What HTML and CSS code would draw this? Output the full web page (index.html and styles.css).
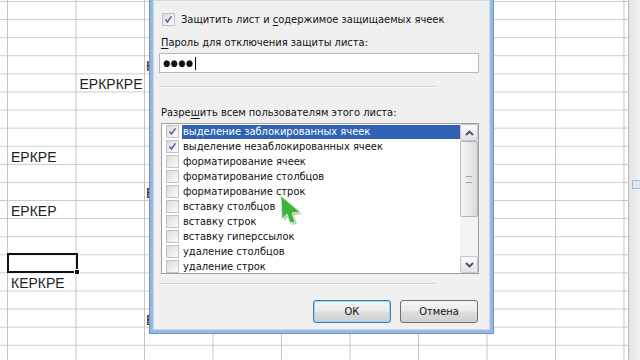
FILE: index.html
```html
<!DOCTYPE html>
<html lang="ru">
<head>
    <meta charset="UTF-8">
    <title>Защита листа</title>
    <link rel="stylesheet" href="styles.css">
</head>
<body>

<div class="screen">
    <div class="sheet">
        <div class="cell c3 r4">Н</div>
        <div class="cell c2 r5">ЕРКРКРЕ</div>
        <div class="cell c1 r9">ЕРКРЕ</div>
        <div class="cell c3 r11">Е</div>
        <div class="cell c1 r12">ЕРКЕР</div>
        <div class="cell c1 r15 selected"></div>
        <div class="cell c1 r16">КЕРКРЕ</div>
        <div class="cell c3 r18">Е</div>
    </div>
    <div class="side-bar">
        <div class="side-knob"></div>
    </div>

    <div class="dialog">
        <div class="check-row">
            <span class="box">
                <svg viewBox="0 0 13 13"><path d="M3 6.5 L5.3 9.5 L10 2.8" /></svg>
            </span>
            <span>Защитить лист и <u>с</u>одержимое защищаемых ячеек</span>
        </div>

        <div class="field-label"><u>П</u>ароль для отключения защиты листа:</div>
        <div class="password">
            <span class="dots">●●●●</span>
        </div>

        <div class="divider"></div>

        <div class="field-label allow">Разре<u>ш</u>ить всем пользователям этого листа:</div>
        <div class="list">
            <ul class="items">
                <li class="item active">
                    <span class="box"><svg viewBox="0 0 13 13"><path d="M3 6.5 L5.3 9.5 L10 2.8" /></svg></span>
                    <span class="text">выделение заблокированных ячеек</span>
                </li>
                <li class="item">
                    <span class="box"><svg viewBox="0 0 13 13"><path d="M3 6.5 L5.3 9.5 L10 2.8" /></svg></span>
                    <span class="text">выделение незаблокированных ячеек</span>
                </li>
                <li class="item"><span class="box"></span><span class="text">форматирование ячеек</span></li>
                <li class="item"><span class="box"></span><span class="text">форматирование столбцов</span></li>
                <li class="item"><span class="box"></span><span class="text">форматирование строк</span></li>
                <li class="item"><span class="box"></span><span class="text">вставку столбцов</span></li>
                <li class="item"><span class="box"></span><span class="text">вставку строк</span></li>
                <li class="item"><span class="box"></span><span class="text">вставку гиперссылок</span></li>
                <li class="item"><span class="box"></span><span class="text">удаление столбцов</span></li>
                <li class="item"><span class="box"></span><span class="text">удаление строк</span></li>
            </ul>
            <div class="vbar">
                <div class="vbtn">
                    <svg viewBox="0 0 9 6"><path d="M1 5 L4.5 1.5 L8 5" /></svg>
                </div>
                <div class="thumb"><span class="grip"></span></div>
                <div class="track"></div>
                <div class="vbtn">
                    <svg viewBox="0 0 9 6"><path d="M1 1 L4.5 4.5 L8 1" /></svg>
                </div>
            </div>
        </div>

        <div class="divider lower"></div>

        <div class="buttons">
            <button class="btn default">ОК</button>
            <button class="btn">Отмена</button>
        </div>
    </div>

    <svg class="pointer" viewBox="0 0 26 32">
        <path class="pointer-shadow" d="M5 4 L24 20 L16 21 L19 30 L14 31 L11 22 L6 27 Z" />
        <path class="pointer-body" d="M3 2 L22 18 L14 19 L17 28 L12 29 L9 20 L4 25 Z" />
    </svg>
</div>

</body>
</html>
```

FILE: styles.css
```css
body {
    margin: 0;
    background-color: #fff;
}
.screen {
    position: relative;
    width: 640px;
    height: 360px;
    overflow: hidden;
    display: flex;
    background-color: #fff;
}

/* spreadsheet */
.sheet {
    flex: 1;
    display: grid;
    grid-template-columns: repeat(9, 68.5px) 1fr;
    grid-template-rows: repeat(20, 18.1px);
    padding: 1px 0 0 7px;
    background-image:
        linear-gradient(to right, #c4c4c4 1px, transparent 1px),
        linear-gradient(to bottom, #cbcbcb 1px, transparent 1px);
    background-size: 68.5px 100%, 100% 18.1px;
    background-position: 7px 0, 0 1px;
    font-family: "Liberation Sans", Arial, sans-serif;
    font-size: 14px;
    color: #222;
}
.cell {
    position: relative;
    padding: 3px 0 0 4px;
    line-height: 16px;
    white-space: nowrap;
}
.c1 { grid-column: 1; }
.c2 { grid-column: 2; }
.c3 { grid-column: 3; padding-left: 2px; }
.r4 { grid-row: 4; }
.r5 { grid-row: 5; }
.r9 { grid-row: 9; }
.r11 { grid-row: 11; }
.r12 { grid-row: 12; }
.r15 { grid-row: 15; }
.r16 { grid-row: 16; }
.r18 { grid-row: 18; }
.selected {
    margin: -1px -2px -1px 0;
    border: 2px solid #111;
}
.selected::after {
    content: "";
    position: absolute;
    right: -4px;
    bottom: -4px;
    width: 4px;
    height: 4px;
    background-color: #111;
    border: 1px solid #fff;
}
.side-bar {
    width: 12px;
    border-left: 1px solid #bdbdbd;
    background: linear-gradient(to right, #e4e4e4, #f2f2f2);
    padding-top: 180px;
    box-sizing: border-box;
}
.side-knob {
    width: 7px;
    height: 7px;
    margin-left: 3px;
    border: 1px solid #a9b8cc;
    background-color: #dfe7f2;
}

/* dialog */
.dialog {
    position: absolute;
    left: 150px;
    top: 0;
    width: 343px;
    height: 333px;
    box-sizing: border-box;
    border: 3px solid #97b8e0;
    border-top: none;
    box-shadow: 0 0 0 1px #6d93c4, inset 0 0 0 1px #c9dbf0;
    background-color: #f0f0f0;
    padding: 12px 11px 0 6px;
    display: flex;
    flex-direction: column;
    font-family: "DejaVu Sans Condensed", "DejaVu Sans", Verdana, sans-serif;
    font-stretch: semi-condensed;
    font-size: 11px;
    color: #111;
}
u {
    text-decoration-thickness: 1px;
    text-underline-offset: 2px;
}
.box {
    width: 11px;
    height: 11px;
    flex: none;
    border: 1px solid #c2c2c2;
    background: linear-gradient(135deg, #dcdcdc, #fbfbfb);
    display: flex;
}
.box svg {
    width: 11px;
    height: 11px;
}
.box path {
    fill: none;
    stroke: #50648f;
    stroke-width: 1.8;
}
.check-row {
    display: flex;
    align-items: center;
    gap: 6px;
    height: 14px;
    margin-left: 3px;
}
.field-label {
    height: 14px;
    line-height: 14px;
    margin-top: 10px;
    padding-left: 2px;
}
.password {
    margin-top: 3px;
    height: 20px;
    box-sizing: border-box;
    border: 1px solid #b5b9c2;
    background-color: #fff;
    display: flex;
    align-items: center;
    padding-left: 3px;
}
.dots {
    display: flex;
    align-items: center;
    font-size: 9px;
    letter-spacing: 0.5px;
    color: #111;
}
.dots::after {
    content: "";
    width: 1px;
    height: 13px;
    margin-left: 2px;
    background-color: #000;
}
.divider {
    margin-top: 13px;
    width: 278px;
    height: 1px;
    background-color: #d5d5d5;
    border-bottom: 1px solid #fbfbfb;
}
.field-label.allow {
    margin-top: 18px;
}
.list {
    margin: 3px 0 0 2px;
    height: 151px;
    box-sizing: border-box;
    border: 1px solid #9a9ea6;
    background-color: #fff;
    display: flex;
}
.items {
    flex: 1;
    list-style: none;
    margin: 0;
    padding: 0;
}
.item {
    height: 15px;
    display: flex;
    align-items: center;
    padding-left: 4px;
}
.item .text {
    flex: 1;
    height: 14px;
    line-height: 14px;
    margin-left: 3px;
    padding-left: 1px;
    white-space: nowrap;
}
.item.active .text {
    background-color: #3162b5;
    color: #fff;
}
.vbar {
    width: 18px;
    display: flex;
    flex-direction: column;
    background-color: #f3f3f3;
}
.vbtn {
    height: 17px;
    box-sizing: border-box;
    border: 1px solid #c4c6ca;
    border-radius: 2px;
    background: linear-gradient(to bottom, #fafafa, #e3e3e3);
    display: flex;
    align-items: center;
    justify-content: center;
}
.vbtn svg {
    width: 9px;
    height: 6px;
}
.vbtn path {
    fill: none;
    stroke: #3f4f6e;
    stroke-width: 1.8;
}
.thumb {
    height: 76px;
    box-sizing: border-box;
    border: 1px solid #b3b5b9;
    border-radius: 2px;
    background: linear-gradient(to right, #f4f4f4, #dcdcdc);
    display: flex;
    align-items: center;
    justify-content: center;
}
.grip {
    width: 6px;
    height: 5px;
    border-top: 1px solid #a8a8a8;
    border-bottom: 1px solid #a8a8a8;
}
.track {
    flex: 1;
}
.divider.lower {
    margin-top: 9px;
}
.buttons {
    margin-top: 15px;
    display: flex;
    justify-content: flex-end;
    gap: 9px;
    padding-right: 1px;
}
.btn {
    width: 78px;
    height: 23px;
    border: 1px solid #707070;
    border-radius: 3px;
    background: linear-gradient(to bottom, #f4f4f4 0%, #ebebeb 48%, #dddddd 52%, #d0d0d0 100%);
    font-family: "DejaVu Sans Condensed", "DejaVu Sans", Verdana, sans-serif;
    font-stretch: semi-condensed;
    font-size: 11px;
    color: #111;
    padding: 0;
}
.btn.default {
    border-color: #3c7fb1;
    box-shadow: inset 0 0 0 1px #a6d1ee;
}

/* recorder cursor */
.pointer {
    position: absolute;
    left: 278px;
    top: 194px;
    width: 26px;
    height: 32px;
}
.pointer-shadow {
    fill: rgba(0, 60, 0, 0.25);
}
.pointer-body {
    fill: #3fb23f;
    stroke: #c9eec0;
    stroke-width: 1;
}
```
